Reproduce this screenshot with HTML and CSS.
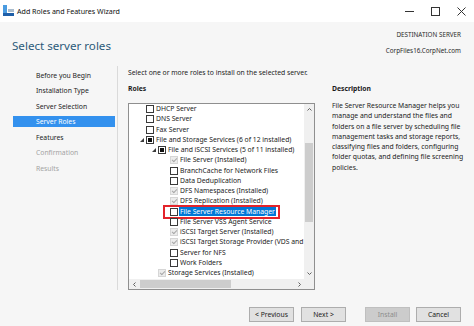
FILE: index.html
```html
<!DOCTYPE html>
<html lang="en">
<head>
  <meta charset="UTF-8">
  <title>Add Roles and Features Wizard</title>
  <link rel="stylesheet" href="styles.css">
</head>
<body>
  <div class="wizard">
    <div class="titlebar">
      <svg class="app-icon" width="11" height="11" viewBox="0 0 11 11">
        <rect x="0" y="0" width="4" height="8" fill="#4a9be0"/>
        <rect x="5" y="4" width="6" height="3" fill="#a9bccd"/>
        <rect x="0" y="8" width="11" height="3" fill="#1f5fa8"/>
      </svg>
      <span class="title">Add Roles and Features Wizard</span>
      <div class="controls">
        <span class="ctl"><svg width="9" height="9" viewBox="0 0 9 9"><path d="M0 4.5H9" stroke="#333" stroke-width="1"/></svg></span>
        <span class="ctl"><svg width="9" height="9" viewBox="0 0 9 9"><rect x="0.5" y="0.5" width="8" height="8" fill="none" stroke="#333" stroke-width="1"/></svg></span>
        <span class="ctl"><svg width="9" height="9" viewBox="0 0 9 9"><path d="M0.5 0.5L8.5 8.5M8.5 0.5L0.5 8.5" stroke="#333" stroke-width="1"/></svg></span>
      </div>
    </div>

    <div class="header">
      <h1>Select server roles</h1>
      <div class="dest">
        <div>DESTINATION SERVER</div>
        <div>CorpFiles16.CorpNet.com</div>
      </div>
    </div>

    <div class="main">
      <ul class="steps">
        <li>Before you Begin</li>
        <li>Installation Type</li>
        <li>Server Selection</li>
        <li class="active">Server Roles</li>
        <li>Features</li>
        <li class="off">Confirmation</li>
        <li class="off">Results</li>
      </ul>

      <div class="content">
        <p class="intro">Select one or more roles to install on the selected server.</p>
        <div class="columns">
          <section class="roles">
            <h2>Roles</h2>
            <div class="listbox">
              <div class="tree">
                <div class="row lv1"><span class="exp"></span><span class="cb"></span><span class="lbl">DHCP Server</span></div>
                <div class="row lv1"><span class="exp"></span><span class="cb"></span><span class="lbl">DNS Server</span></div>
                <div class="row lv1"><span class="exp"></span><span class="cb"></span><span class="lbl">Fax Server</span></div>
                <div class="row lv1"><span class="exp open"></span><span class="cb partial"></span><span class="lbl">File and Storage Services (6 of 12 installed)</span></div>
                <div class="row lv2"><span class="exp open"></span><span class="cb partial"></span><span class="lbl">File and iSCSI Services (5 of 11 installed)</span></div>
                <div class="row lv3"><span class="exp"></span><span class="cb done"></span><span class="lbl">File Server (Installed)</span></div>
                <div class="row lv3"><span class="exp"></span><span class="cb"></span><span class="lbl">BranchCache for Network Files</span></div>
                <div class="row lv3"><span class="exp"></span><span class="cb"></span><span class="lbl">Data Deduplication</span></div>
                <div class="row lv3"><span class="exp"></span><span class="cb done"></span><span class="lbl">DFS Namespaces (Installed)</span></div>
                <div class="row lv3"><span class="exp"></span><span class="cb done"></span><span class="lbl">DFS Replication (Installed)</span></div>
                <div class="row lv3"><span class="exp"></span><span class="mark"><span class="cb"></span><span class="lbl selected">File Server Resource Manager</span></span></div>
                <div class="row lv3"><span class="exp"></span><span class="cb"></span><span class="lbl">File Server VSS Agent Service</span></div>
                <div class="row lv3"><span class="exp"></span><span class="cb done"></span><span class="lbl">iSCSI Target Server (Installed)</span></div>
                <div class="row lv3"><span class="exp"></span><span class="cb done"></span><span class="lbl">iSCSI Target Storage Provider (VDS and</span></div>
                <div class="row lv3"><span class="exp"></span><span class="cb"></span><span class="lbl">Server for NFS</span></div>
                <div class="row lv3"><span class="exp"></span><span class="cb"></span><span class="lbl">Work Folders</span></div>
                <div class="row lv2"><span class="exp"></span><span class="cb done"></span><span class="lbl">Storage Services (Installed)</span></div>
              </div>
              <div class="vscroll">
                <span class="arrow"><svg width="5" height="3" viewBox="0 0 5 3"><path d="M0.5 2.5L2.5 0.5L4.5 2.5" fill="none" stroke="#606060"/></svg></span>
                <span class="thumb"></span>
                <span class="arrow bottom"><svg width="5" height="3" viewBox="0 0 5 3"><path d="M0.5 0.5L2.5 2.5L4.5 0.5" fill="none" stroke="#606060"/></svg></span>
              </div>
              <div class="hscroll">
                <span class="arrow"><svg width="3" height="5" viewBox="0 0 3 5"><path d="M2.5 0.5L0.5 2.5L2.5 4.5" fill="none" stroke="#606060"/></svg></span>
                <span class="thumb"></span>
                <span class="arrow end"><svg width="3" height="5" viewBox="0 0 3 5"><path d="M0.5 0.5L2.5 2.5L0.5 4.5" fill="none" stroke="#606060"/></svg></span>
              </div>
              <div class="corner"></div>
            </div>
          </section>

          <section class="desc">
            <h2>Description</h2>
            <p>File Server Resource Manager helps you<br>
              manage and understand the files and<br>
              folders on a file server by scheduling file<br>
              management tasks and storage reports,<br>
              classifying files and folders, configuring<br>
              folder quotas, and defining file screening<br>
              policies.</p>
          </section>
        </div>
      </div>
    </div>

    <div class="footer">
      <button class="btn">&lt; Previous</button>
      <button class="btn">Next &gt;</button>
      <button class="btn install" disabled>Install</button>
      <button class="btn">Cancel</button>
    </div>
  </div>
</body>
</html>
```

FILE: styles.css
```css
:root {
  --text: #1b1b1b;
  --muted: #a3a3a3;
  --accent: #3391ee;
  --select: #0078d7;
  --title: #2b5a7a;
  --panel: #f6f6f6;
  --font: 6.8px;
}

* {
  box-sizing: border-box;
  margin: 0;
  padding: 0;
}

body {
  font-family: 'Noto Sans', 'Open Sans', sans-serif;
  font-size: var(--font);
  color: var(--text);
  background: var(--panel);
}

.wizard {
  width: 474px;
  height: 326px;
  display: flex;
  flex-direction: column;
  overflow: hidden;
}

/* title bar */
.titlebar {
  height: 22px;
  background: #ffffff;
  display: flex;
  align-items: center;
  padding-left: 3px;
}

.app-icon {
  margin-top: -1px;
}

.title {
  margin-left: 3px;
  font-size: 7.1px;
  color: #111;
}

.controls {
  margin-left: auto;
  display: flex;
  height: 100%;
}

.ctl {
  width: 26px;
  display: flex;
  align-items: center;
  justify-content: center;
}

/* header */
.header {
  height: 40px;
  display: flex;
  justify-content: space-between;
  padding: 0 13px 0 12px;
}

h1 {
  margin-top: 16px;
  font-size: 11.6px;
  line-height: 16px;
  font-weight: 400;
  color: var(--title);
}

.dest {
  padding-top: 5px;
  text-align: right;
  font-size: 6.3px;
  line-height: 16px;
  color: #2a2a2a;
}

/* body */
.main {
  flex: 1;
  display: flex;
}

.steps {
  list-style: none;
  width: 118px;
  margin-top: 4px;
  margin-bottom: 8px;
  padding-top: 3.5px;
  border-right: 1px solid #dadada;
}

.steps li {
  height: 11px;
  line-height: 11px;
  margin: 0 2px 4.5px 13px;
  padding-left: 23px;
}

.steps li.active {
  background: var(--accent);
  color: #fff;
}

.steps li.off {
  color: var(--muted);
}

.content {
  flex: 1;
  padding: 6px 0 0 10px;
}

.intro {
  line-height: 10px;
}

.columns {
  display: flex;
  gap: 17px;
  margin-top: 6px;
}

h2 {
  font-size: var(--font);
  font-weight: 700;
  line-height: 10px;
}

.roles {
  width: 187px;
}

.roles h2 {
  margin-bottom: 9px;
}

.listbox {
  height: 187px;
  border: 1px solid #8f8f8f;
  background: #fff;
  display: grid;
  grid-template-columns: 1fr 10px;
  grid-template-rows: 1fr 10px;
}

.tree {
  overflow: hidden;
}

.row {
  height: 10.25px;
  display: flex;
  align-items: center;
  white-space: nowrap;
}

.lv1 { padding-left: 11px; }
.lv2 { padding-left: 23px; }
.lv3 { padding-left: 35px; }

.exp {
  width: 6px;
  flex: none;
}

.exp.open::before {
  content: '';
  display: block;
  width: 0;
  height: 0;
  border-left: 4px solid transparent;
  border-bottom: 4px solid #3c3c3c;
}

.cb {
  width: 8px;
  height: 8px;
  flex: none;
  border: 1px solid #3a3a3a;
  background: #fff;
  display: flex;
  align-items: center;
  justify-content: center;
}

.cb.partial::after {
  content: '';
  width: 4px;
  height: 4px;
  background: #111;
}

.cb.done {
  border-color: #d6d6d6;
  background: #ececec;
}

.cb.done::after {
  content: '';
  width: 2px;
  height: 4px;
  margin-top: -1px;
  border-right: 1px solid #a8a8a8;
  border-bottom: 1px solid #a8a8a8;
  transform: rotate(45deg);
}

.lbl {
  margin-left: 2px;
  line-height: 10px;
}

.mark {
  display: inline-flex;
  align-items: center;
  height: 10px;
  margin-left: -5px;
  padding: 0 2px 0 5px;
  outline: 2px solid #e3242b;
}

.lbl.selected {
  margin-left: 1px;
  padding: 0 1px;
  line-height: 9px;
  background: var(--select);
  color: #fff;
}

.vscroll {
  background: #f0f0f0;
  display: flex;
  flex-direction: column;
}

.arrow {
  width: 10px;
  height: 10px;
  flex: none;
  display: flex;
  align-items: center;
  justify-content: center;
}

.vscroll .thumb {
  height: 79px;
  margin: 29px 1px 0;
  background: #cdcdcd;
}

.vscroll .bottom {
  margin-top: auto;
  margin-bottom: 1px;
}

.hscroll {
  background: #f0f0f0;
  display: flex;
  align-items: center;
}

.hscroll .thumb {
  width: 91px;
  height: 8px;
  margin-left: 1px;
  background: #cdcdcd;
}

.hscroll .end {
  margin-left: auto;
}

.corner {
  background: #f0f0f0;
}

.desc h2 {
  margin-bottom: 7px;
}

.desc p {
  line-height: 10.25px;
  white-space: nowrap;
}

/* buttons */
.footer {
  height: 28px;
  display: flex;
  justify-content: flex-end;
  align-items: flex-start;
  padding: 9px 13px 0 0;
}

.btn {
  width: 45px;
  height: 15px;
  border: 1px solid #adadad;
  background: #e1e1e1;
  font-family: inherit;
  font-size: var(--font);
  color: var(--text);
}

.btn + .btn {
  margin-left: 7px;
}

.btn.install {
  margin-left: 19px;
  background: #cccccc;
  border-color: #bfbfbf;
  color: #8c8c8c;
}

.btn.install + .btn {
  margin-left: 6px;
}
```
